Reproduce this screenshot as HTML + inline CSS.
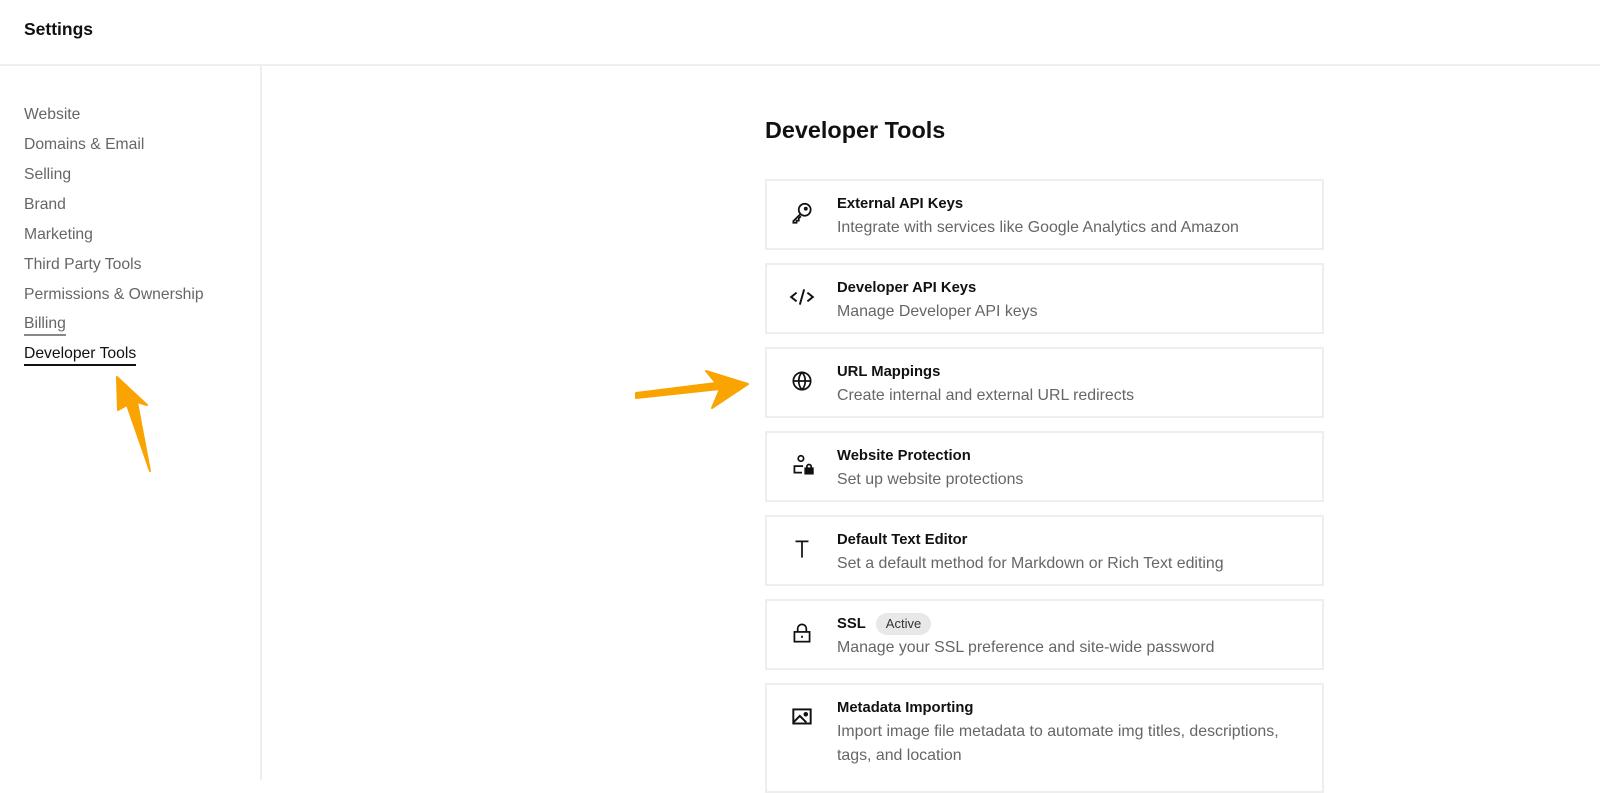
<!DOCTYPE html>
<html><head><style>
*{margin:0;padding:0;box-sizing:border-box}
body{width:1600px;height:780px;overflow:hidden;background:#fff;font-family:"Liberation Sans",Arial,sans-serif;color:#111;position:relative}
.hdr{position:absolute;left:0;top:0;width:1600px;height:66px;border-bottom:2px solid #eee}
.hdr span{position:absolute;left:24px;top:19px;font-size:17.5px;font-weight:bold}
.side{position:absolute;left:260px;top:66px;width:2px;height:714px;background:#eee}
.nav{position:absolute;left:24px;font-size:15.7px;color:#666}
.nav.b{border-bottom:2px solid #888;padding-bottom:1px}
.nav.a{color:#111;border-bottom:2px solid #111;padding-bottom:1px}
h1{position:absolute;left:765px;top:117px;font-size:23.4px;font-weight:bold}
.card{position:absolute;left:765px;width:559px;height:71px;border:2px solid #eee}
.card .t{position:absolute;left:70px;top:13px;font-size:14.8px;font-weight:bold;color:#111;line-height:20px;white-space:nowrap}
.card .d{position:absolute;left:70px;top:35px;font-size:15.9px;color:#666;line-height:24px;width:460px}
.card svg{position:absolute;left:22px;top:19px}
.pill{display:inline-block;background:#e8e8e8;border-radius:12px;font-weight:normal;font-size:13px;line-height:16px;padding:3px 10px;margin-left:10px;color:#333;vertical-align:top;position:relative;top:-1px}
</style></head><body>
<div class="hdr"><span>Settings</span></div>
<div class="side"></div>
<div class="nav" style="top:106px">Website</div>
<div class="nav" style="top:136px">Domains &amp; Email</div>
<div class="nav" style="top:166px">Selling</div>
<div class="nav" style="top:196px">Brand</div>
<div class="nav" style="top:226px">Marketing</div>
<div class="nav" style="top:256px">Third Party Tools</div>
<div class="nav" style="top:286px">Permissions &amp; Ownership</div>
<div class="nav b" style="top:315px">Billing</div>
<div class="nav a" style="top:345px">Developer Tools</div>
<h1>Developer Tools</h1>

<div class="card" style="top:179px"><svg width="26" height="26" viewBox="0 0 24 24" fill="none" stroke="#111" stroke-width="1.6"><circle cx="14.5" cy="9" r="5.5"/><circle cx="15.5" cy="8" r="1"/><path d="M10.5 13 L4 19.5 L4 21 L7 21 L7 19 L9 19 L9 17 L11 15"/></svg><div class="t">External API Keys</div><div class="d">Integrate with services like Google Analytics and Amazon</div></div>
<div class="card" style="top:263px"><svg width="26" height="26" viewBox="0 0 24 24" fill="none" stroke="#111" stroke-width="1.8"><path d="M7 8 L2 12 L7 16 M17 8 L22 12 L17 16 M14 5 L10 19"/></svg><div class="t">Developer API Keys</div><div class="d">Manage Developer API keys</div></div>
<div class="card" style="top:347px"><svg width="26" height="26" viewBox="0 0 24 24" fill="none" stroke="#111" stroke-width="1.6"><circle cx="12" cy="12" r="8"/><path d="M4 12 H20 M12 4 C8 8 8 16 12 20 C16 16 16 8 12 4"/></svg><div class="t">URL Mappings</div><div class="d">Create internal and external URL redirects</div></div>
<div class="card" style="top:431px"><svg width="26" height="26" viewBox="0 0 24 24" fill="none" stroke="#111" stroke-width="1.6"><circle cx="11" cy="6" r="2.5"/><path d="M13 13 H5 V19 H12"/><rect x="15" y="15" width="7" height="5" fill="#111"/><path d="M16.5 15 V13.5 A2 2 0 0 1 20.5 13.5 V15"/></svg><div class="t">Website Protection</div><div class="d">Set up website protections</div></div>
<div class="card" style="top:515px"><svg width="26" height="26" viewBox="0 0 24 24" fill="none" stroke="#111" stroke-width="1.6"><path d="M6 5 H18 M12 5 V20"/></svg><div class="t">Default Text Editor</div><div class="d">Set a default method for Markdown or Rich Text editing</div></div>
<div class="card" style="top:599px"><svg width="26" height="26" viewBox="0 0 24 24" fill="none" stroke="#111" stroke-width="1.6"><rect x="5" y="11" width="14" height="9"/><path d="M8 11 V8 A4 4 0 0 1 16 8 V11 M12 14.5 V16.5"/></svg><div class="t">SSL<span class="pill">Active</span></div><div class="d">Manage your SSL preference and site-wide password</div></div>
<div class="card" style="top:683px;height:110px"><svg width="26" height="26" viewBox="0 0 24 24" fill="none" stroke="#111" stroke-width="1.8"><rect x="4" y="5" width="16" height="13"/><path d="M4 17 L10 11 L16 17" /><circle cx="15.5" cy="9.5" r="1.2" fill="#111"/></svg><div class="t">Metadata Importing</div><div class="d">Import image file metadata to automate img titles, descriptions, tags, and location</div></div>

<svg style="position:absolute;left:0;top:0" width="1600" height="780">
<path d="M150 471 L127 405 L118 410 L117 377 L147 405 L137 402 Z" fill="#F9A400" stroke="#F9A400" stroke-width="2" stroke-linejoin="round"/>
<path d="M636 398 L720 389 L712 408 L748 384 L706 371 L716 383 L636 393 Z" fill="#F9A400" stroke="#F9A400" stroke-width="2" stroke-linejoin="round"/>
</svg>
</body></html>
